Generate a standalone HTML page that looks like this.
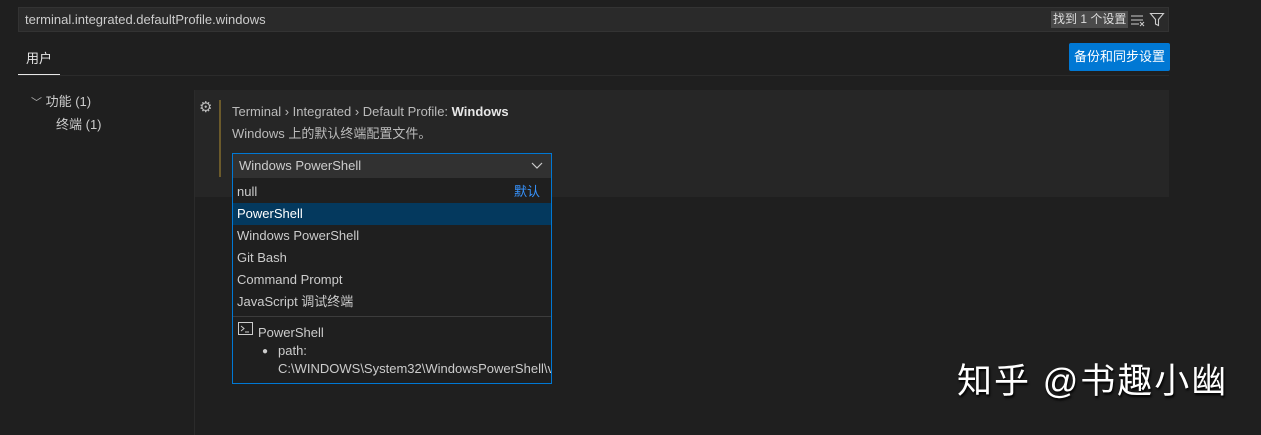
<!DOCTYPE html>
<html><head><meta charset="utf-8"><style>
body{margin:0;width:1261px;height:435px;background:#1f1f1f;font-family:"Liberation Sans","Noto Sans CJK SC",sans-serif;font-size:13px;color:#ccc;position:relative;overflow:hidden}
.a{position:absolute;white-space:nowrap;line-height:16px}
</style></head><body>
<div class="a" style="left:18px;top:7px;width:1151px;height:25px;background:#2a2a2a;border:1px solid #333;box-sizing:border-box"></div>
<div class="a" style="left:25px;top:12px;color:#ccc">terminal.integrated.defaultProfile.windows</div>
<div class="a" style="left:1051px;top:11px;height:17px;padding:0 2px;background:#4a4a4a;color:#ddd;font-size:12px;line-height:17px">找到 1 个设置</div>
<svg class="a" style="left:1130px;top:13px" width="16" height="14"><path d="M1 3h12M1 7h12M1 11h8M10 9l4 4M14 9l-4 4" stroke="#ccc" stroke-width="1"/></svg>
<svg class="a" style="left:1149px;top:12px" width="16" height="16"><path d="M1.5 1.5h13l-5 6v6l-3-1.5v-4.5z" fill="none" stroke="#ccc" stroke-width="1.1"/></svg>
<div class="a" style="left:26px;top:51px;color:#e7e7e7">用户</div>
<div class="a" style="left:18px;top:74px;width:42px;height:1px;background:#e7e7e7"></div>
<div class="a" style="left:18px;top:75px;width:1151px;height:1px;background:#2b2b2b"></div>
<div class="a" style="left:1069px;top:43px;width:101px;height:28px;background:#0078d4;border-radius:2px;color:#fff;line-height:28px;text-align:center">备份和同步设置</div>
<div class="a" style="left:31px;top:94px;color:#ccc"><span style="font-size:11px;color:#aaa">﹀</span> 功能 (1)</div>
<div class="a" style="left:56px;top:117px;color:#ccc">终端 (1)</div>
<div class="a" style="left:194px;top:90px;width:1px;height:345px;background:#2b2b2b"></div>
<div class="a" style="left:195px;top:90px;width:974px;height:107px;background:#262626"></div>
<div class="a" style="left:199px;top:100px;font-size:15px;color:#bbb">⚙</div>
<div class="a" style="left:219px;top:100px;width:2px;height:77px;background:#6b5a2b"></div>
<div class="a" style="left:232px;top:104px;color:#bbb">Terminal › Integrated › Default Profile: <b style="color:#e7e7e7">Windows</b></div>
<div class="a" style="left:232px;top:126px;color:#bbb">Windows 上的默认终端配置文件。</div>
<div class="a" style="left:232px;top:153px;width:320px;height:26px;background:#313131;border:1px solid #0078d4;box-sizing:border-box"></div>
<div class="a" style="left:239px;top:158px;color:#ccc">Windows PowerShell</div>
<svg class="a" style="left:531px;top:160px" width="12" height="10"><path d="M1 3l5 5 5-5" fill="none" stroke="#ccc" stroke-width="1.2"/></svg>
<div class="a" style="left:232px;top:178px;width:320px;height:206px;background:#1f1f1f;border:1px solid #0078d4;border-top:none;box-sizing:border-box"></div>
<div class="a" style="left:237px;top:184px;color:#ccc">null</div>
<div class="a" style="left:514px;top:184px;color:#3794ff">默认</div>
<div class="a" style="left:233px;top:203px;width:318px;height:22px;background:#04395e"></div>
<div class="a" style="left:237px;top:206px;color:#fff">PowerShell</div>
<div class="a" style="left:237px;top:228px">Windows PowerShell</div>
<div class="a" style="left:237px;top:250px">Git Bash</div>
<div class="a" style="left:237px;top:272px">Command Prompt</div>
<div class="a" style="left:237px;top:294px">JavaScript 调试终端</div>
<div class="a" style="left:233px;top:316px;width:318px;height:1px;background:#3c3c3c"></div>
<svg class="a" style="left:238px;top:322px" width="15" height="14"><rect x="0.5" y="0.5" width="14" height="12" fill="none" stroke="#ccc"/><path d="M3 4l3 2.5-3 2.5M7 10h4" fill="none" stroke="#ccc"/></svg>
<div class="a" style="left:258px;top:325px">PowerShell</div>
<div class="a" style="left:262px;top:344px;font-size:10px">●</div>
<div class="a" style="left:278px;top:343px">path:</div>
<div class="a" style="left:278px;top:361px;width:273px;overflow:hidden;font-size:13px">C:\WINDOWS\System32\WindowsPowerShell\v1.0</div>
<div class="a" style="left:957px;top:362px;font-size:35px;line-height:40px;letter-spacing:2px;color:#fff;text-shadow:1px 2px 2px #000">知乎 @书趣小幽</div>
</body></html>
